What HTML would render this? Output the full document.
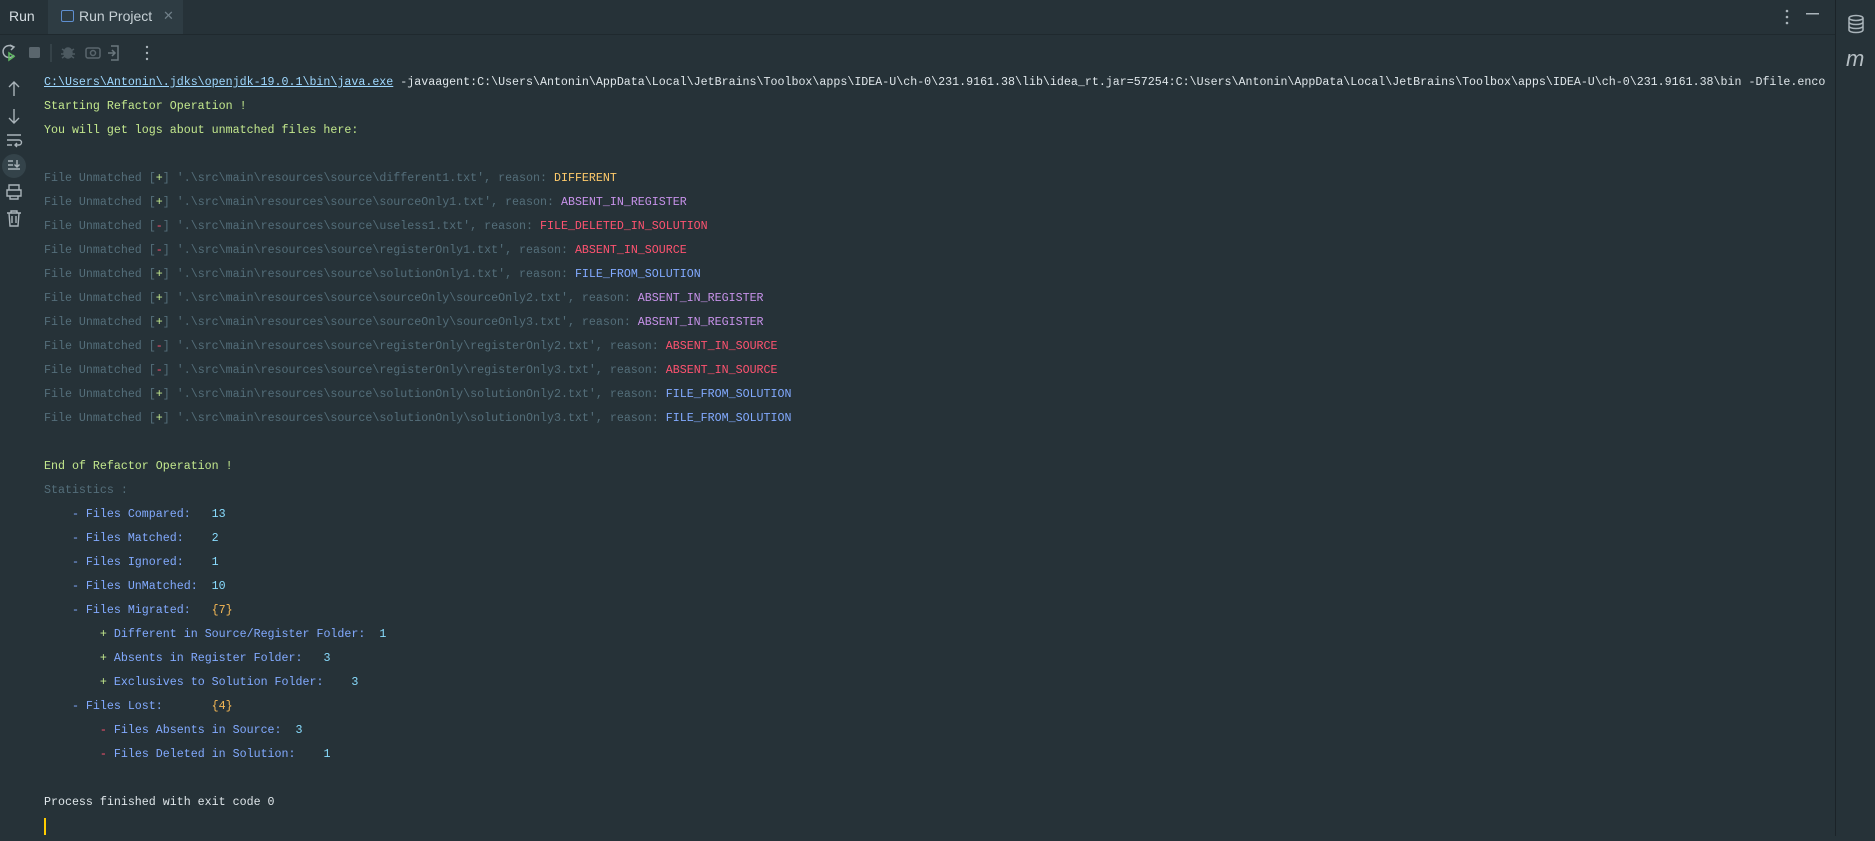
<!DOCTYPE html>
<html><head><meta charset="utf-8"><style>
*{margin:0;padding:0;box-sizing:border-box}
body{width:1875px;height:836px;background:#263238;overflow:hidden;position:relative;font-family:"Liberation Sans",sans-serif}
.top{position:absolute;left:0;top:0;width:1835px;height:35px;border-bottom:1px solid #1f292e;background:#263238}
.run{position:absolute;left:9px;top:8px;color:#d5dde2;font-size:14px}
.tab{position:absolute;left:48px;top:0;width:135px;height:34px;background:#2e3c43;color:#c7d1d6;font-size:14px;padding:8px 0 0 31px}
.tab .ic{position:absolute;left:13px;top:10px;width:13px;height:12px;border:1.5px solid #5f8fd0;border-radius:2px}
.tab .x{position:absolute;left:115px;top:8px;color:#6f7f88;font-size:13px}
.side{position:absolute;left:1835px;top:0;width:40px;height:836px;border-left:1px solid #1b2328;background:#263238}
.con{position:absolute;left:44px;top:71px;width:1782px;height:770px;overflow:hidden;font-family:"Liberation Mono",monospace;font-size:11.65px;line-height:24px;white-space:pre;color:#dfe6ea}
.g{color:#546e7a}.gr{color:#c3e88d}.y{color:#ffcb6b}.p{color:#c792ea}.r{color:#ff5370}.b{color:#82aaff}.c{color:#89ddff}.o{color:#f7b955}
.lk{color:#9fd8ff;text-decoration:underline}
svg{position:absolute}
.cur{position:absolute;left:44px;top:818px;width:2px;height:17px;background:#ffcc00}
</style></head><body>
<div class="top">
<div class="run">Run</div>
<div class="tab"><div class="ic"></div>Run Project<span class="x">✕</span></div>
<svg style="left:1783px;top:8px" width="8" height="18"><circle cx="4" cy="3" r="1.3" fill="#aab4ba"/><circle cx="4" cy="9" r="1.3" fill="#aab4ba"/><circle cx="4" cy="15" r="1.3" fill="#aab4ba"/></svg>
<svg style="left:1806px;top:12px" width="14" height="4"><rect y="1" width="13" height="1.5" fill="#aab4ba"/></svg>
</div>
<div class="side">
<svg style="left:10px;top:14px" width="20" height="20" fill="none" stroke="#aab4ba" stroke-width="1.5"><ellipse cx="10" cy="4" rx="7" ry="2.5"/><path d="M3 4v12c0 1.4 3 2.5 7 2.5s7-1.1 7-2.5V4M3 8c0 1.4 3 2.5 7 2.5s7-1.1 7-2.5M3 12c0 1.4 3 2.5 7 2.5s7-1.1 7-2.5"/></svg>
<div style="position:absolute;left:10px;top:46px;color:#b5bec3;font-size:22px;font-style:italic">m</div>
</div>
<!-- toolbar -->
<svg style="left:0;top:42px" width="160" height="22" fill="none" stroke-width="1.5">
<path d="M13 5a6 6 0 1 0 1 8" stroke="#aab4ba"/><path d="M10 3l4 2-3 3" stroke="#aab4ba"/><path d="M9 11v7l5-3.5z" stroke="#5fb760"/>
<rect x="29" y="5" width="11" height="11" rx="1.5" fill="#5a666d" stroke="none"/>
<line x1="51" y1="2" x2="51" y2="20" stroke="#3a474e"/>
<ellipse cx="68" cy="11" rx="4" ry="5" fill="#4d5a61" stroke="#4d5a61"/><path d="M62 7l3 2M74 7l-3 2M61 12h3M75 12h-3M62 16l3-2M74 16l-3-2" stroke="#4d5a61"/>
<rect x="86" y="6" width="14" height="10" rx="2" stroke="#5a666d"/><circle cx="93" cy="11" r="2.5" stroke="#5a666d"/>
<path d="M111 4h7v14h-7M108 11h7M112 8l3 3-3 3" stroke="#6a777e"/>
<circle cx="147" cy="5" r="1.2" fill="#aab4ba" stroke="none"/><circle cx="147" cy="11" r="1.2" fill="#aab4ba" stroke="none"/><circle cx="147" cy="17" r="1.2" fill="#aab4ba" stroke="none"/>
</svg>
<!-- left column -->
<svg style="left:0;top:78px" width="30" height="160" fill="none" stroke="#aab4ba" stroke-width="1.4">
<path d="M14 4v14M9 9l5-5 5 5"/>
<path d="M14 31v14M9 40l5 5 5-5"/>
<path d="M7 57h14M7 62h12a2.5 2.5 0 0 1 0 5h-4M17 65l-2 2 2 2M7 67h5"/>
<circle cx="14" cy="88" r="12" fill="#34434a" stroke="none"/>
<path d="M8 83h5M8 87h5M8 91h12M17 82v7M14.5 86.5l2.5 2.5 2.5-2.5"/>
<path d="M9 112v-5h10v5M7 112h14v6H7zM10 118v3h8v-3"/>
<path d="M7 135h14M11 135v-2h6v2M9 135l1 13h8l1-13M12 138v7M16 138v7"/>
</svg>
<div class="con"><span class="lk">C:\Users\Antonin\.jdks\openjdk-19.0.1\bin\java.exe</span> -javaagent:C:\Users\Antonin\AppData\Local\JetBrains\Toolbox\apps\IDEA-U\ch-0\231.9161.38\lib\idea_rt.jar=57254:C:\Users\Antonin\AppData\Local\JetBrains\Toolbox\apps\IDEA-U\ch-0\231.9161.38\bin -Dfile.encoding=UTF-8
<span class="gr">Starting Refactor Operation !</span>
<span class="gr">You will get logs about unmatched files here:</span>

<span class="g">File Unmatched [<span class="gr">+</span>] '.\src\main\resources\source\different1.txt', reason: </span><span class="y">DIFFERENT</span>
<span class="g">File Unmatched [<span class="gr">+</span>] '.\src\main\resources\source\sourceOnly1.txt', reason: </span><span class="p">ABSENT_IN_REGISTER</span>
<span class="g">File Unmatched [<span class="r">-</span>] '.\src\main\resources\source\useless1.txt', reason: </span><span class="r">FILE_DELETED_IN_SOLUTION</span>
<span class="g">File Unmatched [<span class="r">-</span>] '.\src\main\resources\source\registerOnly1.txt', reason: </span><span class="r">ABSENT_IN_SOURCE</span>
<span class="g">File Unmatched [<span class="gr">+</span>] '.\src\main\resources\source\solutionOnly1.txt', reason: </span><span class="b">FILE_FROM_SOLUTION</span>
<span class="g">File Unmatched [<span class="gr">+</span>] '.\src\main\resources\source\sourceOnly\sourceOnly2.txt', reason: </span><span class="p">ABSENT_IN_REGISTER</span>
<span class="g">File Unmatched [<span class="gr">+</span>] '.\src\main\resources\source\sourceOnly\sourceOnly3.txt', reason: </span><span class="p">ABSENT_IN_REGISTER</span>
<span class="g">File Unmatched [<span class="r">-</span>] '.\src\main\resources\source\registerOnly\registerOnly2.txt', reason: </span><span class="r">ABSENT_IN_SOURCE</span>
<span class="g">File Unmatched [<span class="r">-</span>] '.\src\main\resources\source\registerOnly\registerOnly3.txt', reason: </span><span class="r">ABSENT_IN_SOURCE</span>
<span class="g">File Unmatched [<span class="gr">+</span>] '.\src\main\resources\source\solutionOnly\solutionOnly2.txt', reason: </span><span class="b">FILE_FROM_SOLUTION</span>
<span class="g">File Unmatched [<span class="gr">+</span>] '.\src\main\resources\source\solutionOnly\solutionOnly3.txt', reason: </span><span class="b">FILE_FROM_SOLUTION</span>

<span class="gr">End of Refactor Operation !</span>
<span class="g">Statistics :</span>
<span class="b">    - Files Compared:   </span><span class="c">13</span>
<span class="b">    - Files Matched:    </span><span class="c">2</span>
<span class="b">    - Files Ignored:    </span><span class="c">1</span>
<span class="b">    - Files UnMatched:  </span><span class="c">10</span>
<span class="b">    - Files Migrated:   </span><span class="o">{7}</span>
        <span class="gr">+</span><span class="b"> Different in Source/Register Folder:  </span><span class="c">1</span>
        <span class="gr">+</span><span class="b"> Absents in Register Folder:   </span><span class="c">3</span>
        <span class="gr">+</span><span class="b"> Exclusives to Solution Folder:    </span><span class="c">3</span>
<span class="b">    - Files Lost:       </span><span class="o">{4}</span>
        <span class="r">-</span><span class="b"> Files Absents in Source:  </span><span class="c">3</span>
        <span class="r">-</span><span class="b"> Files Deleted in Solution:    </span><span class="c">1</span>

Process finished with exit code 0
</div>
<div class="cur"></div>
</body></html>
